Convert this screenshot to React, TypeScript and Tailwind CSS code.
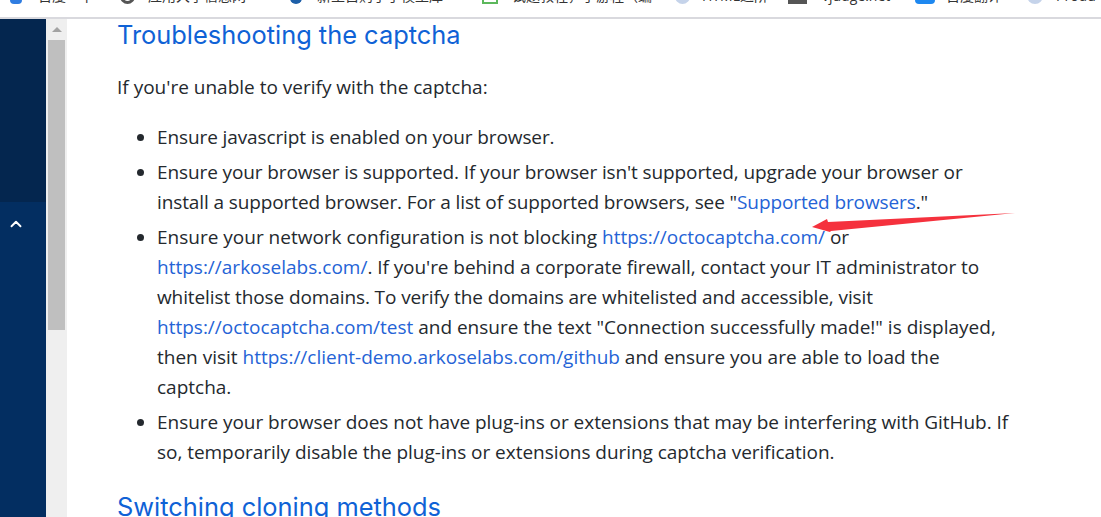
import { ChevronUp } from 'lucide-react'

const bookmarks = [
  { label: '百度一下', w: 'w-[110px]', gap: 'gap-[16px]', icon: <span className="block w-[12px] h-[14px] rounded-sm bg-[#2f7de1]" /> },
  { label: '应用大学信息网', w: 'w-[170px]', gap: 'gap-[13px]', icon: <span className="block w-[15px] h-[15px] rounded-full border-[3px] border-[#555]" /> },
  { label: '新生自购手手模型库', w: 'w-[192px]', gap: 'gap-[15px]', icon: <span className="block w-[12px] h-[14px] rounded-full bg-[#1d5fa8]" /> },
  { label: '试题教程，手游程（编', w: 'w-[193px]', gap: 'gap-[14px]', icon: <span className="block w-[16px] h-[14px] border-2 border-[#5cb85c]" /> },
  { label: 'HTML进阶', w: 'w-[113px]', gap: 'gap-[12px]', icon: <span className="block w-[15px] h-[15px] rounded-full bg-[#c5d3ea]" /> },
  { label: 'vjudge.net', w: 'w-[127px]', gap: 'gap-[15px]', icon: <span className="block w-[19px] h-[14px] bg-[#555]" /> },
  { label: '百度翻译', w: 'w-[112px]', gap: 'gap-[11px]', icon: <span className="block w-[20px] h-[14px] rounded bg-[#1e88f0]" /> },
  { label: 'Produ', w: 'w-[74px]', gap: 'gap-[13px]', icon: <span className="block w-[16px] h-[16px] rounded-full bg-[#c5d3ea]" /> },
]

function BookmarkBar() {
  return (
    <div className="h-[17px] bg-white overflow-hidden">
      <div className="flex items-end h-[4px] pl-[10px]">
        {bookmarks.map(b => (
          <div key={b.label} className={`flex items-end shrink-0 ${b.gap} ${b.w}`}>
            {b.icon}
            <span className="text-[14px] leading-[16px] text-[#333] whitespace-nowrap">{b.label}</span>
          </div>
        ))}
      </div>
    </div>
  )
}

function A({ children }: { children: React.ReactNode }) {
  return <a className="text-[#2563d6]">{children}</a>
}

export default function App() {
  return (
    <div className="w-[1101px] h-[517px] overflow-hidden bg-white font-['Open_Sans','Noto_Sans_CJK_SC',sans-serif]">
      <BookmarkBar />
      <div className="h-[2px] bg-[#d9d9de]" />
      <div className="flex h-[498px]">
        <aside className="w-[46px] shrink-0 flex flex-col">
          <div className="h-[183px] bg-[#04264f]" />
          <div className="flex-1 bg-[#032e61] pt-[13px] pl-[7px]">
            <ChevronUp className="w-[18px] h-[18px] text-white" strokeWidth={2.5} />
          </div>
        </aside>
        <div className="w-[21px] shrink-0 bg-[#efefef] flex flex-col items-center">
          <div className="h-[21px] flex items-center">
            <div className="w-0 h-0 border-x-[5px] border-x-transparent border-b-[5px] border-b-[#a3a3a3]" />
          </div>
          <div className="w-[17px] h-[290px] bg-[#bfbfbf]" />
        </div>
        <main className="flex-1 pl-[50px] pr-[86px] text-[19px] leading-[30px] text-[#24292e]">
          <h2 className="font-['Inter',sans-serif] text-[25.4px] leading-[32px] text-[#0f62d6]">Troubleshooting the captcha</h2>
          <p className="mt-[21px]">If you're unable to verify with the captcha:</p>
          <ul className="list-disc pl-[40px] mt-[20px] space-y-[5px]">
            <li className="tracking-[-0.11px]">Ensure javascript is enabled on your browser.</li>
            <li className="tracking-[-0.11px]">Ensure your browser is supported. If your browser isn't supported, upgrade your browser or install a supported browser. For a list of supported browsers, see "<A>Supported browsers</A>."</li>
            <li>Ensure your network configuration is not blocking <A>https://octocaptcha.com/</A> or <A>https://arkoselabs.com/</A><span className="tracking-[-0.06px]">. If you're behind a corporate firewall, contact your IT administrator to</span> <span className="tracking-[-0.1px]">whitelist those domains. To verify the domains are whitelisted and accessible, visit</span> <A>https://octocaptcha.com/test</A> and ensure the text "Connection successfully made!" is displayed, then visit <A>https://client-demo.arkoselabs.com/github</A> and ensure you are able to load the captcha.</li>
            <li className="tracking-[-0.04px]">Ensure your browser does not have plug-ins or extensions that may be interfering with GitHub. If so, temporarily disable the plug-ins or extensions during captcha verification.</li>
          </ul>
          <h2 className="font-['Inter',sans-serif] text-[25.4px] leading-[32px] text-[#0f62d6] mt-[24px]">Switching cloning methods</h2>
        </main>
      </div>
      <svg className="absolute left-[810px] top-[210px]" width="210" height="24" viewBox="0 0 210 24">
        <path d="M2 17 L17 9 L18 12 L205 3 L21 21 L20 22 Z" fill="#f5313d" />
      </svg>
    </div>
  )
}
